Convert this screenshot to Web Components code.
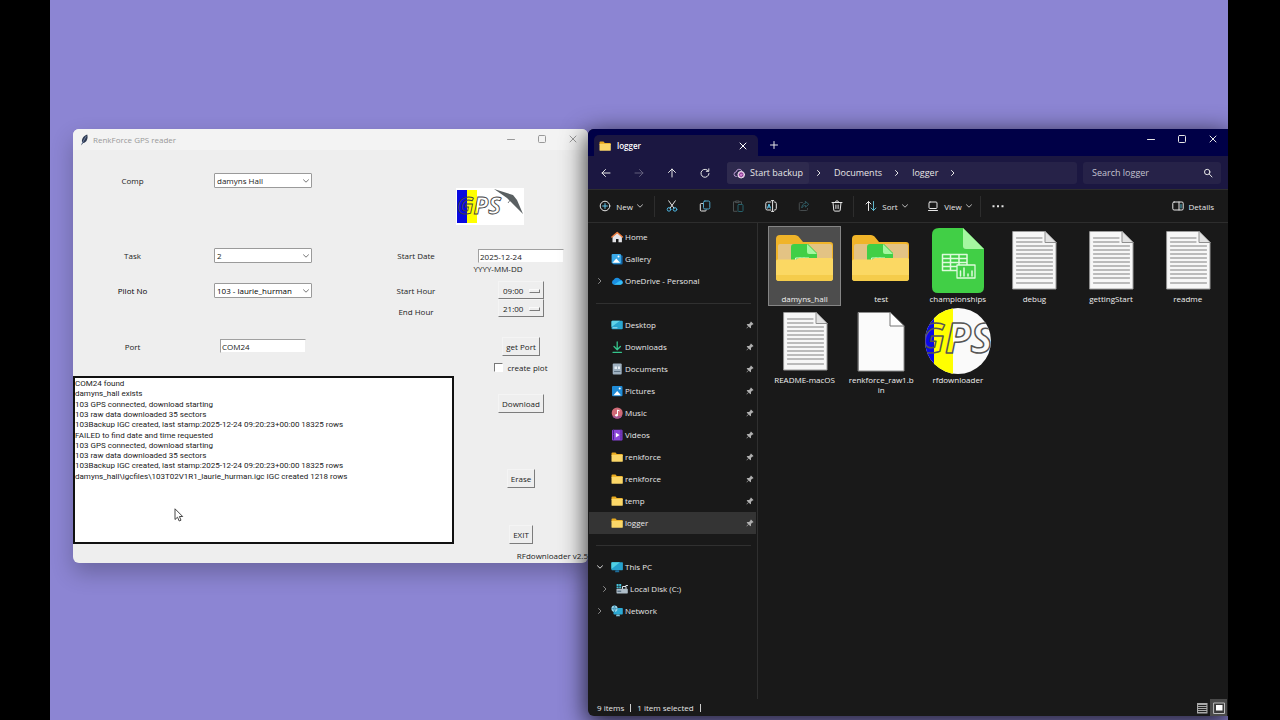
<!DOCTYPE html>
<html lang="en">
<head>
<meta charset="utf-8">
<meta name="viewport" content="width=device-width, initial-scale=1">
<title>RenkForce GPS reader and logger folder</title>
<style>
  html, body { margin: 0; min-height: 100%; background: #000; }
  body { font: 8px/11px "Open Sans", "Noto Sans", sans-serif; }
</style>
</head>
<body>
<desktop-stage>
  <reader-window></reader-window>
  <explorer-window></explorer-window>
</desktop-stage>

<script>
const folderSmall = '<path d="M.5 2.5q0-1 1-1h3l1.3 1.4H11q.8 0 .8.8V5H.5z" fill="#e8a91d"/><rect x=".5" y="3.8" width="11.3" height="7" rx=".9" fill="#fbd768"/>';
const folderLarge = `
  <path d="M4 12q0-4 4-4h15q2 0 3.500 1.500L31 15H58q3 0 3 3v18H4z" fill="#f0b429"/>
  <rect x="6" y="17" width="54" height="30" rx="2" fill="#e3c384"/>
  <path d="M19 20q0-3 3-3h14l9 9v14H19z" fill="#41cf46"/><path d="M35 17l10 10H37q-2 0-2-2z" fill="#a5f7a0"/>
  <path d="M24 31h13v5H24zM28 31v5M32 31v5M24 33.500h13" fill="none" stroke="#d9ffd6"/>
  <path d="M4 34q0-1.500 1.500-1.500H24l3-1.500H59.500q1.500 0 1.500 1.500V51q0 3-3 3H7q-3 0-3-3z" fill="#fbd863"/>
  <path d="M4 48v3q0 3 3 3h51q3 0 3-3v-3z" fill="#f5cc4b"/>`;
const sheetLines = [11,15,19,23,27,31,35,39,43,47,51,56].map((y, i) => `M15.500 ${y}H${i < 2 ? 41 : 51.500}`).join('');
const pageBase = '<path d="M12 4.500H44L55 15.500V62H12z" fill="#f7f7f7" stroke="#9b9b9b"/>';

const ICONS = {
  feather: [12, '<path d="M3 11.500L4.200 8.500C3 5 6 1.500 9.200.500C10.500 4.500 8.500 8.500 5.200 9z" fill="#2e3a52"/><path d="M4 9.500L8 2.500" stroke="#9fb4d6" stroke-width=".6"/>'],
  min: [12, '<path d="M2.500 6.500h7"/>'],
  max: [12, '<rect x="2.500" y="2.500" width="7" height="7" rx="1"/>'],
  close: [12, '<path d="M3 3l6 6M9 3l-6 6"/>'],
  plus: [12, '<path d="M6 2.500v7M2.500 6h7"/>'],
  back: [12, '<path d="M10 6h-8M5.500 2.500L2 6l3.500 3.500"/>'],
  forward: [12, '<path d="M2 6h8M6.500 2.500L10 6l-3.500 3.500"/>'],
  up: [12, '<path d="M6 10v-8M2.500 5.500L6 2l3.500 3.500"/>'],
  refresh: [12, '<path d="M9.300 4A4 4 0 1 0 10 6.500M9.800 1.800v2.500H7.300"/>'],
  right: [8, '<path d="M2.500 1.500L5 4 2.500 6.500"/>'],
  down: [8, '<path d="M1.500 2.800L4 5.200l2.500-2.400"/>'],
  search: [12, '<circle cx="5.200" cy="5" r="2.700"/><path d="M7.200 7l2.800 3"/>'],
  cloud: [12, '<path d="M4 9.500H3.500a2.300 2.300 0 0 1-.3-4.600A3 3 0 0 1 9 4.200" stroke="#b79ad0"/><circle cx="8.200" cy="7.700" r="3.300" fill="#d884d8"/><path d="M6.500 7.500a1.800 1.800 0 0 1 3.200-.7M9.900 8a1.800 1.800 0 0 1-3.200.7" stroke="#5a2a6b" stroke-width=".8"/>'],
  add: [12, '<circle cx="6" cy="6" r="4.800"/><path d="M6 3.600v4.800M3.600 6h4.800" stroke="#5fc3ea"/>'],
  cut: [12, '<path d="M2.700.800L8 8.200M9.300.800L4 8.200"/><circle cx="3" cy="9.400" r="1.800" stroke="#4cb4e0"/><circle cx="9" cy="9.400" r="1.800" stroke="#4cb4e0"/>'],
  copy: [12, '<path d="M3.500 3.500H2.300a1 1 0 0 0-1 1V10a1 1 0 0 0 1 1h4a1 1 0 0 0 1-1"/><rect x="4.500" y="1" width="6.300" height="8" rx="1.400" stroke="#4ea5c9"/>'],
  paste: [12, '<path d="M4 1.800H1.500v9.500H5M7 1.800h2.500V4M4 1h3v1.600H4z" stroke="#4b5152"/><rect x="6" y="4.500" width="5" height="7" rx=".8" stroke="#26616b"/>'],
  rename: [12, '<path d="M5.800 2H2.300A1.500 1.500 0 0 0 .8 3.500v5A1.500 1.500 0 0 0 2.300 10h3.500M9.300 2h.5a1.500 1.500 0 0 1 1.500 1.500v5A1.500 1.500 0 0 1 9.800 10h-.5M7.600.800v10.400M6.500.600h2.200M6.500 11.400h2.200"/><path d="M2.500 8.200L4 4l1.500 4.200M3 7h2" stroke="#5fc3ea"/>'],
  share: [12, '<path d="M4.500 2.500H2.300a1 1 0 0 0-1 1V9.500a1 1 0 0 0 1 1H8.500a1 1 0 0 0 1-1V8.500" stroke="#454b4d"/><path d="M7.500 1.500l3.300 2.800-3.300 2.800V5.500C5.500 5.500 4.500 6.500 3.800 8c0-2.800 1.500-4.700 3.700-4.900z" stroke="#2f5a62"/>'],
  trash: [12, '<path d="M1 2.500h10M4.300 2.500a1.700 1.700 0 0 1 3.400 0M2 2.500l.8 7.700a1 1 0 0 0 1 .9h4.400a1 1 0 0 0 1-.9L10 2.500M4.900 5v3.500M7.100 5v3.500"/>'],
  sort: [12, '<path d="M3.500 10.500v-9M1 4l2.500-2.500L6 4"/><path d="M8.500 1.500v9M6 8l2.500 2.500L11 8" stroke="#5fb5c9"/>'],
  view: [12, '<rect x="2" y="2" width="8" height="6.500" rx="1"/><path d="M1.500 10.500h9"/>'],
  dots: [12, '<path d="M.5 5.200h2v2h-2zM5 5.200h2v2H5zM9.500 5.200h2v2h-2z" fill="currentColor" stroke="none"/>'],
  details: [12, '<rect x=".8" y="2" width="10.400" height="8" rx="1.300"/><path d="M7 2v8" /><path d="M9 4.500v3.500" stroke="#4cb4c8"/>'],
  pin: [8, '<path d="M5 .500L7.500 3 6.800 3.700 6.300 3.600 5 5 5 6.700 4.300 7.300 2.700 5.600 .8 7.400 .5 7.100 2.300 5.200 .7 3.700 1.300 3H3L4.400 1.700 4.300 1.200z" fill="#b0b0b0" stroke="none"/>'],
  home: [12, '<path d="M1.500 5.500L6.200 1.800l4.700 3.700v5.800H7.500V8h-2.500v3.300H1.500z" fill="#e3e3e6"/><path d="M.9 6L6.200 1.500l5.300 4.500" stroke="#ef7c3c" stroke-width="1.500"/>'],
  gallery: [12, '<rect x="2" y="2.200" width="9.600" height="9.300" rx="1" fill="#1468a8"/><rect x=".6" y="1" width="9.400" height="9.600" rx="1" fill="#3aa9e8"/><path d="M1.500 9.800l3.800-4.300 3.800 4.300z" fill="#fff"/><circle cx="7.500" cy="3.600" r="1" fill="#fff"/>'],
  onedrive: [12, '<path d="M3 9.800A2.600 2.600 0 0 1 2.800 4.800 3.600 3.600 0 0 1 9.200 4.500 2.700 2.700 0 0 1 9.500 9.800z" fill="#1b8ee0"/><path d="M3 9.800l5-3.500a3 3 0 0 1 3.900.8A2.700 2.700 0 0 1 9.500 9.800z" fill="#35bdf7"/>'],
  desktop: [12, '<rect x=".5" y="1.800" width="11.300" height="8.500" rx="1" fill="#29a5d0"/><path d="M.5 8V2.800q0-1 1-1H9z" fill="#5fd3ea"/><path d="M2 8.800h4" stroke="#c8f3ff" stroke-width=".8"/>'],
  downloads: [12, '<path d="M6.200 1v7.500M3 5.500l3.200 3.200L9.400 5.500M2 11.300h8.500" stroke="#35c48c" stroke-width="1.300"/>'],
  documents: [12, '<rect x="1.700" y=".6" width="9" height="11" rx="1" fill="#9fb1c0"/><path d="M3.500 3.500h2.500v2.500H3.500zM7 3.500h2v2.500H7z" fill="#e6eef4"/><path d="M3.500 8.500h5.500" stroke="#5d7283"/>'],
  pictures: [12, '<rect x="1" y="1" width="10.500" height="10.300" rx="1" fill="#1f8bd6"/><path d="M2.500 10.300l3.700-4.300 3.800 4.300z" fill="#fff"/><circle cx="8.700" cy="3.500" r="1" fill="#fff"/>'],
  music: [12, '<circle cx="6.200" cy="6" r="5.500" fill="#cf6a76"/><path d="M1.500 9A5.500 5.500 0 0 0 11 9z" fill="#a4568e"/><path d="M6.500 8V3l1.800.8" stroke="#fff"/><circle cx="5.500" cy="8.200" r="1.300" fill="#fff"/>'],
  videos: [12, '<rect x="1" y=".8" width="10.500" height="10.800" rx="1" fill="#8a45d8"/><path d="M2.500 1v10.300M10 1v10.300" stroke="#4f2391" stroke-dasharray="1.500 1"/><path d="M4.800 3.800v4.600L8.600 6z" fill="#fff"/>'],
  folder: [12, folderSmall],
  pc: [12, '<rect x=".4" y="1.200" width="11.500" height="8" rx=".7" fill="#25a0cc"/><path d="M.4 8V1.900q0-.7.7-.7H9z" fill="#4fd0e4"/><path d="M4.500 9.200h3.400l.5 2H4z" fill="#1d6d9b"/>'],
  disk: [12, '<rect x=".5" y="5.800" width="11.300" height="4.600" rx=".6" fill="#aebdc8"/><path d="M.6 1h2v2h-2zM3.200 1h2v2h-2zM.6 3.500h2v1.700h-2zM3.200 3.500h2v1.700h-2z" fill="#45c3dc"/><path d="M6.500 5.500V3.500h3.500v2M10 2.500h1.500" stroke="#dde8ef"/><path d="M1.800 8.200h3" stroke="#3c556a"/>'],
  network: [12, '<rect x="2.500" y="3" width="9.300" height="6.500" rx=".7" fill="#2ba9d4"/><path d="M5.500 9.500h3l.5 1.800H5z" fill="#7fc5e0"/><circle cx="3.500" cy="3.700" r="3.100" fill="#9bd8ee"/><path d="M.5 3.700h6M3.500.7q-2 3 0 6M3.500.7q2 3 0 6" stroke="#2a7fa5" stroke-width=".6"/>'],
  list: [12, '<rect x="1" y="1" width="10.500" height="10.500" fill="#a9a9a9"/><path d="M2.500 3.500h7.500M2.500 5.500h7.500M2.500 7.500h7.500M2.500 9.500h7.500" stroke="#222"/>'],
  tiles: [12, '<rect x="1" y="1" width="10.500" height="10.500" fill="#3a3a3a" stroke="#bdbdbd"/><rect x="3" y="3" width="6.500" height="5.500" fill="#fff"/>'],
  bigfolder: [66, folderLarge],
  sheet: [66, '<path d="M7 8q0-7 7-7H38L59 22V60q0 6-6 6H13q-6 0-6-6z" fill="#41cf46"/><path d="M38 1L59 22H41q-3 0-3-3z" fill="#a5f7a0"/><path d="M17.500 27.500h24.500v16H17.500zM17.500 31.500H42M17.500 35.500H42M17.500 39.500H42M25.500 27.500v16M34 27.500v16" stroke="#defbdc" stroke-width="1.500"/><rect x="32" y="38" width="18" height="13" fill="#41cf46" stroke="#defbdc" stroke-width="1.300"/><path d="M35.500 49v-5M39 49v-8M43 49v-2M47 49v-5" stroke="#defbdc" stroke-width="1.500"/>'],
  text: [66, pageBase + `<path d="${sheetLines}" stroke="#a8a8a8" stroke-width="1.300"/><path d="M44 4.500V15.500H55z" fill="#e2e2e2" stroke="#8f8f8f"/>`],
  blank: [66, '<path d="M10.500 4.500H42L56 18V63H10.500z" fill="#fbfbfb" stroke="#8c8c8c"/><path d="M42 4.500V18H56z" fill="#fff" stroke="#777"/>'],
  gpsround: [66, '<defs><clipPath id="disc"><circle cx="33" cy="33" r="33"/></clipPath></defs><g clip-path="url(#disc)"><path d="M0 0h66v66H0z" fill="#fafafa"/><path d="M0 0h9v66H0z" fill="#0a0ae6"/><path d="M9 0h19v66H9z" fill="#ff0"/><text x="-9" y="45" font-family="Open Sans, sans-serif" font-size="42" font-style="italic" font-weight="700" fill="none" stroke="#555" stroke-width="1.500">GPS</text></g>'],
};

const define = (name, html, setup) => {
  const template = document.createElement('template');
  template.innerHTML = html;
  customElements.define(name, class extends HTMLElement {
    constructor() {
      super();
      this.attachShadow({ mode: 'open' }).append(template.content.cloneNode(true));
    }
    connectedCallback() { if (setup) setup(this, this.shadowRoot); }
  });
};

/* Icon drawn from the table above; strokes follow the text colour. */
define('app-icon', `
<style>
  :host { display: inline-flex; flex: none; }
  svg { display: block; fill: none; stroke-linecap: round; stroke-linejoin: round; overflow: visible; }
</style><span></span>`, (el, root) => {
  const [size, art] = ICONS[el.getAttribute('name')];
  const line = size < 60 && !/fill="#/.test(art.split('>')[0]);
  root.querySelector('span').innerHTML =
    `<svg width="${size}" height="${size}" viewBox="0 0 ${size} ${size}" ${line ? 'stroke="currentColor"' : ''} aria-hidden="true">${art}</svg>`;
});

define('desktop-stage', `
<style>
  :host {
    display: grid; grid-template-columns: 515fr 640fr; align-items: start; box-sizing: border-box;
    min-height: 100vh; margin: 0 52px 0 50px; padding: 129px 0 4px 23px; overflow: hidden;
    background: #8c85d3;
  }
  ::slotted(explorer-window) { align-self: stretch; }
</style><slot></slot>`);

define('window-controls', `
<style>
  :host { display: flex; flex: none; }
  button { width: 31px; height: 20px; padding: 0; border: 0; background: none; color: inherit; display: grid; place-items: center; }
</style>
<button aria-label="Minimize"><app-icon name="min"></app-icon></button>
<button aria-label="Maximize"><app-icon name="max"></app-icon></button>
<button aria-label="Close"><app-icon name="close"></app-icon></button>`);

/* Label and control pair; both become cells of the surrounding form grid. */
const fieldStyle = `
  :host { display: contents; }
  label { grid-area: var(--row) / var(--label-col); justify-self: center; align-self: center; white-space: nowrap; }
  input, select { font: inherit; color: inherit; box-sizing: border-box; margin: 0; appearance: none; border-radius: 0; outline: 0; }`;

define('tk-combo', `
<style>${fieldStyle}
  .box { grid-area: var(--row) / 2; place-self: center; position: relative; width: 98px; display: grid; }
  select { height: 15px; padding: 0 14px 0 2px; border: 1px solid #9a9a9a; border-radius: 1px; background: #fff; }
  app-icon { position: absolute; right: 2px; top: 4px; color: #777; pointer-events: none; }
</style>
<label for="c"></label><span class="box"><select id="c"><option></option></select><app-icon name="down"></app-icon></span>`,
(el, root) => {
  root.querySelector('label').textContent = el.getAttribute('label');
  root.querySelector('option').textContent = el.getAttribute('value');
});

define('tk-entry', `
<style>${fieldStyle}
  .box { grid-area: var(--row) / var(--field-col, 2); place-self: var(--place, center); display: grid; justify-items: center; }
  input { width: 86px; height: 14px; padding: 0 0 0 1px; border: solid #eee; border-width: 1px; border-top-color: #a0a0a0; border-left-color: #a0a0a0; background: #fff; }
  .hint { padding: 0 46px 7px 0; }
  .hint:empty { display: none; }
</style>
<label for="c"></label><span class="box"><input id="c" type="text"><span class="hint"></span></span>`,
(el, root) => {
  root.querySelector('label').textContent = el.getAttribute('label');
  root.querySelector('input').value = el.getAttribute('value');
  root.querySelector('.hint').textContent = el.getAttribute('hint') || '';
});

define('tk-option', `
<style>${fieldStyle}
  .box { grid-area: var(--row) / 5; place-self: start center; position: relative; display: grid; width: 46px; }
  select { height: 18px; padding: 0 0 0 4px; border: 1px solid #f4f4f4; border-right-color: #7c7c7c; border-bottom-color: #7c7c7c; background: #eee; }
  .mark { position: absolute; right: 4px; top: 8px; width: 11px; height: 4px; box-sizing: border-box; border: 1px solid #fafafa; border-right-color: #7c7c7c; border-bottom-color: #7c7c7c; pointer-events: none; }
</style>
<label for="c"></label><span class="box"><select id="c"><option></option></select><span class="mark"></span></span>`,
(el, root) => {
  root.querySelector('label').textContent = el.getAttribute('label');
  root.querySelector('option').textContent = el.getAttribute('value');
});

define('tk-button', `
<style>
  :host { display: block; }
  button { height: 19px; padding: 0 3px; font: inherit; color: inherit; background: #eee; border: 1px solid #f4f4f4; border-right-color: #7c7c7c; border-bottom-color: #7c7c7c; border-radius: 0; white-space: nowrap; }
</style><button><slot></slot></button>`);

define('gps-logo', `
<style>:host { display: block; } svg { display: block; }</style>
<svg width="68" height="37" viewBox="0 0 68 37" role="img" aria-label="GPS logo">
  <path d="M0 0h68v37H0z" fill="#fff"/><path d="M1 2h10v33H1z" fill="#0a0ae0"/><path d="M11 2h10v33H11z" fill="#ff0"/>
  <text x="1" y="26" font-family="Open Sans, sans-serif" font-size="24" font-style="italic" font-weight="700" fill="none" stroke="#444" stroke-width=".9">GPS</text>
  <path d="M38 1L57 7 61 12 67 26 55 14 51 10z" fill="#5a6062"/><path d="M55 11l-3 4" stroke="#5a6062" stroke-width=".8"/>
</svg>`);

define('reader-window', `
<style>
  :host { display: block; position: relative; min-width: 0; color: #222; background: #eee; border-radius: 6px; box-shadow: 0 10px 22px rgba(0,0,0,.24); }
  header { display: flex; align-items: center; height: 21px; background: #f3f3f3; border-radius: 6px 6px 0 0; color: #999; }
  header app-icon { margin: 0 3px 0 5px; }
  h1 { flex: 1; margin: 0; font: inherit; }
  header window-controls { align-self: start; color: #999; }
  .form { display: grid; grid-template-columns: 119fr 142fr 44fr 76fr 134fr; grid-template-rows: 60px 19px 52px 18px 24px 10px 26px 17px minmax(168px, auto) 19px; }
  gps-logo { grid-area: 1 / 5 / 3 / 6; place-self: end start; margin: 0 0 4px 2px; }
  .get { grid-area: 7 / 5; place-self: center; }
  .plot { grid-area: 8 / 5; place-self: center; display: flex; align-items: center; gap: 4px; }
  .plot input { appearance: none; width: 9px; height: 9px; box-sizing: border-box; margin: 0; background: #fff; border: 1px solid #fff; border-top-color: #777; border-left-color: #777; }
  .log { grid-area: 9 / 1 / 10 / 5; box-sizing: border-box; border: 2px solid #111; background: #fff; font-family: Roboto, sans-serif; padding-top: 1px; }
  .log ol { list-style: none; margin: 0; padding: 0; display: grid; grid-auto-rows: 1fr; height: 103px; line-height: 10px; }
  .log li { white-space: nowrap; }
  .actions { grid-area: 9 / 5; display: flex; flex-direction: column; align-items: center; padding-top: 18px; }
  .actions .erase { margin: 56px 0 37px; }
  footer { grid-area: 10 / 5; align-self: center; text-align: right; white-space: nowrap; padding-top: 4px; }
  .pointer { position: absolute; left: 101px; top: 379px; }
</style>
<header><app-icon name="feather"></app-icon><h1>RenkForce GPS reader</h1><window-controls></window-controls></header>
<div class="form">
  <tk-combo label="Comp" value="damyns Hall" style="--row:1;--label-col:1"></tk-combo>
  <gps-logo></gps-logo>
  <tk-combo label="Task" value="2" style="--row:3;--label-col:1"></tk-combo>
  <tk-entry label="Start Date" value="2025-12-24" hint="YYYY-MM-DD" style="--row:3;--label-col:4;--field-col:5;--place:end center"></tk-entry>
  <tk-combo label="Pilot No" value="103 - laurie_hurman" style="--row:4;--label-col:1;color:#000"></tk-combo>
  <tk-option label="Start Hour" value="09:00" style="--row:4;--label-col:4"></tk-option>
  <tk-option label="End Hour" value="21:00" style="--row:5;--label-col:4"></tk-option>
  <tk-entry label="Port" value="COM24" style="--row:7;--label-col:1"></tk-entry>
  <tk-button class="get">get Port</tk-button>
  <label class="plot"><input type="checkbox">create plot</label>
  <div class="log" role="log"><ol>
    <li>COM24 found</li><li>damyns_hall exists</li>
    <li>103 GPS connected, download starting</li><li>103 raw data downloaded 35 sectors</li>
    <li>103Backup IGC created, last stamp:2025-12-24 09:20:23+00:00 18325 rows</li>
    <li>FAILED to find date and time requested</li>
    <li>103 GPS connected, download starting</li><li>103 raw data downloaded 35 sectors</li>
    <li>103Backup IGC created, last stamp:2025-12-24 09:20:23+00:00 18325 rows</li>
    <li>damyns_hall\\igcfiles\\103T02V1R1_laurie_hurman.igc IGC created 1218 rows</li>
  </ol></div>
  <div class="actions"><tk-button>Download</tk-button><tk-button class="erase">Erase</tk-button><tk-button>EXIT</tk-button></div>
  <footer>RFdownloader v2.5</footer>
</div>
<svg class="pointer" width="10" height="14" viewBox="0 0 10 14" aria-hidden="true"><path d="M1 .8V11.500L3.500 9.200 5.200 13 7 12.200 5.400 8.500H8.700z" fill="#fff" stroke="#333" stroke-width=".9"/></svg>`);

define('tool-button', `
<style>
  :host { display: block; flex: none; }
  button { display: flex; align-items: center; justify-content: center; gap: 5px; width: 100%; height: 24px; padding: 0; border: 0; background: none; color: inherit; font: inherit; }
  .more { margin-left: -2px; opacity: .8; }
</style><button><slot></slot></button>`, (el, root) => {
  const button = root.querySelector('button');
  const icon = name => Object.assign(document.createElement('app-icon'), { className: name });
  const lead = icon('lead');
  lead.setAttribute('name', el.getAttribute('icon'));
  button.prepend(lead);
  if (el.hasAttribute('label')) button.setAttribute('aria-label', el.getAttribute('label'));
  if (el.hasAttribute('menu')) {
    const more = icon('more');
    more.setAttribute('name', 'down');
    button.append(more);
  }
});

define('nav-item', `
<style>
  :host { display: block; }
  a { display: grid; grid-template-columns: 22px 12px 1fr 8px; align-items: center; height: 22px; padding: 0 2px 0 0; color: #e8e8e8; text-decoration: none; }
  :host([nested]) a { padding-left: 5px; }
  :host([current]) a { background: #343434; }
  .tw { justify-self: center; color: #888; display: grid; }
  :host([open]) .tw { color: #ddd; }
  .name { padding: 0 0 1px 2px; white-space: nowrap; }
</style><a href="#"><span class="tw"></span><span class="ic"></span><span class="name"><slot></slot></span><span class="pin"></span></a>`,
(el, root) => {
  const put = (sel, name) => { root.querySelector(sel).innerHTML = `<app-icon name="${name}" style="display:flex"></app-icon>`; };
  put('.ic', el.getAttribute('icon'));
  if (el.hasAttribute('pinned')) put('.pin', 'pin');
  if (el.hasAttribute('closed')) put('.tw', 'right');
  if (el.hasAttribute('open')) put('.tw', 'down');
});

define('file-tile', `
<style>
  :host { display: block; box-sizing: border-box; min-height: 80px; margin: 0 2px; border: 1px solid transparent; text-align: center; }
  :host([selected]) { background: #4d4d4d; border-color: #858585; }
  .ic { display: grid; justify-content: center; }
  .name { display: block; padding: 1px 2px 0; line-height: 10px; color: #f0f0f0; word-break: break-all; }
</style><span class="ic"></span><span class="name"><slot></slot></span>`,
(el, root) => { root.querySelector('.ic').innerHTML = `<app-icon name="${el.getAttribute('icon')}"></app-icon>`; });

define('explorer-window', `
<style>
  :host { display: flex; flex-direction: column; position: relative; z-index: 1; min-width: 0; background: #191919; color: #e6e6e6; border-radius: 6px 0 0 6px; box-shadow: 0 6px 24px 2px rgba(0,0,0,.75); }
  .title { display: flex; height: 27px; background: #000047; border-radius: 6px 0 0 0; }
  .tab { display: flex; align-items: center; gap: 6px; width: 154px; margin: 6px 0 0 6px; padding: 0 5px; background: #1b1741; border-radius: 5px 5px 0 0; font-weight: 600; color: #fff; }
  .tab span { flex: 1; }
  button { padding: 0; border: 0; background: none; color: inherit; display: grid; place-items: center; font: inherit; }
  .tab button { width: 20px; height: 20px; }
  .new-tab { width: 31px; height: 20px; margin: 6px auto 0 0; }
  .nav { display: flex; align-items: center; height: 33px; background: #1b1741; font-size: 9px; line-height: 12px; padding: 0 7px 0 1px; }
  .nav tool-button { width: 33px; }
  .crumbs { display: flex; align-items: center; flex: 1; height: 22px; margin: 0 0 0 6px; background: #262248; border-radius: 3px; list-style: none; padding: 0; }
  .crumbs li { display: flex; align-items: center; }
  .crumbs a { color: inherit; text-decoration: none; white-space: nowrap; }
  .crumbs .chip { height: 22px; gap: 5px; padding: 0 6px; margin-right: 6px; background: #2e2a4e; border-radius: 3px; }
  .crumbs .sep { margin-right: 11px; }
  .crumbs .end { margin-left: 11px; }
  .search { display: flex; align-items: center; flex: 0 0 138px; min-width: 0; height: 22px; margin-left: 6px; padding-right: 7px; box-sizing: border-box; background: #262248; border-radius: 3px; }
  .search input { flex: 1; width: 0; min-width: 0; padding: 0 0 0 9px; border: 0; background: none; outline: 0; font: inherit; color: inherit; }
  .search input::placeholder { color: #c4c2d0; }
  .tools { display: flex; align-items: center; height: 32px; border: solid #2d2d2d; border-width: 1px 0; padding: 0 11px 0 1px; }
  .tools i { width: 1px; height: 21px; background: #2d2d2d; }
  .tools .one { width: 33px; }
  .main { display: grid; grid-template-columns: 170fr 469fr; flex: 1; }
  nav { border-right: 1px solid #2f2f2f; padding: 3px 1px 0; }
  hr { margin: 11px 5px 10px 7px; border: 0; height: 1px; background: #303030; }
  .files { display: grid; grid-template-columns: repeat(6, 1fr); align-content: start; row-gap: 1px; padding: 3px 2px 0 8px; }
  .status { display: flex; align-items: center; height: 17px; padding: 0 1px 0 9px; gap: 6px; }
  .status b { width: 1px; height: 8px; background: #ccc; }
  .status .views { display: flex; margin-left: auto; }
  .status button { width: 17px; height: 17px; }
  .status button:last-child { background: #4a4a4a; }
</style>
<div class="title">
  <div class="tab"><app-icon name="folder"></app-icon><span>logger</span><button aria-label="Close tab"><app-icon name="close"></app-icon></button></div>
  <button class="new-tab" aria-label="New tab"><app-icon name="plus"></app-icon></button>
  <window-controls></window-controls>
</div>
<div class="nav">
  <tool-button icon="back" label="Back"></tool-button><tool-button icon="forward" label="Forward" style="color:#625f7c"></tool-button>
  <tool-button icon="up" label="Up"></tool-button><tool-button icon="refresh" label="Refresh"></tool-button>
  <ul class="crumbs">
    <li class="chip"><app-icon name="cloud"></app-icon><a href="#">Start backup</a></li>
    <li class="sep"><app-icon name="right"></app-icon></li><li><a href="#">Documents</a></li>
    <li class="sep end"><app-icon name="right"></app-icon></li><li><a href="#">logger</a></li>
    <li class="end"><app-icon name="right"></app-icon></li>
  </ul>
  <div class="search"><input type="search" aria-label="Search logger" placeholder="Search logger"><app-icon name="search"></app-icon></div>
</div>
<div class="tools">
  <tool-button icon="add" menu style="width:65px">New</tool-button><i></i>
  <tool-button class="one" icon="cut" label="Cut"></tool-button><tool-button class="one" icon="copy" label="Copy"></tool-button>
  <tool-button class="one" icon="paste" label="Paste"></tool-button><tool-button class="one" icon="rename" label="Rename"></tool-button>
  <tool-button class="one" icon="share" label="Share"></tool-button><tool-button class="one" icon="trash" label="Delete"></tool-button><i></i>
  <tool-button icon="sort" menu style="width:66px">Sort</tool-button>
  <tool-button icon="view" menu style="width:60px">View</tool-button><i></i>
  <tool-button class="one" icon="dots" label="See more"></tool-button>
  <tool-button icon="details" style="margin-left:auto;padding-right:3px">Details</tool-button>
</div>
<div class="main">
  <nav>
    <nav-item icon="home">Home</nav-item><nav-item icon="gallery">Gallery</nav-item><nav-item icon="onedrive" closed>OneDrive - Personal</nav-item>
    <hr>
    <nav-item icon="desktop" pinned>Desktop</nav-item><nav-item icon="downloads" pinned>Downloads</nav-item>
    <nav-item icon="documents" pinned>Documents</nav-item><nav-item icon="pictures" pinned>Pictures</nav-item>
    <nav-item icon="music" pinned>Music</nav-item><nav-item icon="videos" pinned>Videos</nav-item>
    <nav-item icon="folder" pinned>renkforce</nav-item><nav-item icon="folder" pinned>renkforce</nav-item>
    <nav-item icon="folder" pinned>temp</nav-item><nav-item icon="folder" pinned current>logger</nav-item>
    <hr>
    <nav-item icon="pc" open>This PC</nav-item><nav-item icon="disk" closed nested>Local Disk (C:)</nav-item><nav-item icon="network" closed>Network</nav-item>
  </nav>
  <div class="files">
    <file-tile icon="bigfolder" selected>damyns_hall</file-tile><file-tile icon="bigfolder">test</file-tile>
    <file-tile icon="sheet">championships</file-tile><file-tile icon="text">debug</file-tile>
    <file-tile icon="text">gettingStart</file-tile><file-tile icon="text">readme</file-tile>
    <file-tile icon="text">README-macOS</file-tile><file-tile icon="blank">renkforce_raw1.bin</file-tile>
    <file-tile icon="gpsround">rfdownloader</file-tile>
  </div>
</div>
<div class="status"><span>9 items</span><b></b><span>1 item selected</span><b></b>
  <span class="views"><button aria-label="Details view"><app-icon name="list"></app-icon></button><button aria-label="Large icons"><app-icon name="tiles"></app-icon></button></span>
</div>`);
</script>
</body>
</html>
